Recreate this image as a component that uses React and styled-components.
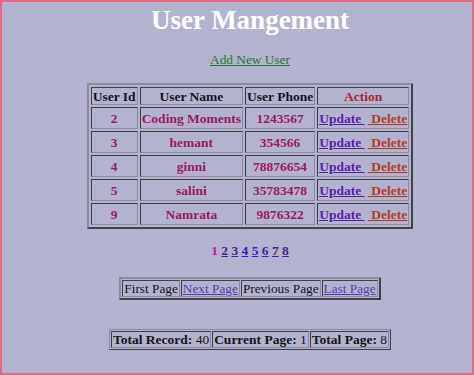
import React from 'react'
import styled, { createGlobalStyle } from 'styled-components'

const GlobalStyle = createGlobalStyle`
  html, body {
    margin: 0;
    padding: 0;
  }
  body {
    font-family: "Liberation Serif", "Times New Roman", serif;
  }
`

const Page = styled.div`
  box-sizing: border-box;
  width: 474px;
  height: 375px;
  border: 2px solid #e06a80;
  background: #b3b3d0;
  display: flex;
  flex-direction: column;
  align-items: center;
  padding-left: 26px;
  overflow: hidden;
`

const Title = styled.h1`
  margin: 3px 0 0;
  font-size: 27px;
  line-height: 30px;
  font-weight: bold;
  color: #ffffff;
`

const AddLink = styled.a`
  margin-top: 17px;
  font-size: 13.33px;
  line-height: 15px;
  color: #1f7a2a;
  text-decoration: underline;
  cursor: pointer;
`

const Table = styled.table`
  border: ${p => p.$border || 2}px outset #8c8c9c;
  border-spacing: ${p => p.$spacing || 2}px;
  margin-top: ${p => p.$top}px;
  font-size: ${p => p.$size || 13.5}px;
  line-height: 15px;
`

const Head = styled.th`
  border: 1px inset #8c8c9c;
  padding: 1px 1px 0;
  font-weight: bold;
  color: ${p => p.$color || '#151520'};
  text-align: center;
  white-space: nowrap;
`

const Cell = styled.td`
  border: 1px inset #8c8c9c;
  padding: 3px 1px 2px;
  font-weight: bold;
  color: #9b1b5a;
  text-align: center;
  white-space: nowrap;
`

const ActionLink = styled.a`
  color: ${p => p.$color};
  text-decoration: underline;
  cursor: pointer;
`

const Pager = styled.div`
  margin-top: 14px;
  font-size: 13.5px;
  line-height: 15px;
  font-weight: bold;
  display: flex;
  gap: 3.4px;
`

const PageNum = styled.a`
  color: ${p => p.$color};
  text-decoration: ${p => (p.$current ? 'none' : 'underline')};
  cursor: pointer;
`

const PlainCell = styled.td`
  border: 1px inset #8c8c9c;
  padding: 0 1px;
  color: #151515;
  white-space: nowrap;
`

const NavLink = styled.a`
  color: #5b3aa8;
  text-decoration: underline;
  cursor: pointer;
`

const users = [
  { id: 2, name: 'Coding Moments', phone: '1243567' },
  { id: 3, name: 'hemant', phone: '354566' },
  { id: 4, name: 'ginni', phone: '78876654' },
  { id: 5, name: 'salini', phone: '35783478' },
  { id: 9, name: 'Namrata', phone: '9876322' },
]

const pageColors = ['#c21f9e', '#4a2590', '#4a2590', '#2222c8', '#2a2ac4', '#3a2ab0', '#4a2590', '#4a2590']

export default function App() {
  return (
    <>
      <GlobalStyle />
      <Page>
        <Title>User Mangement</Title>
        <AddLink>Add New User</AddLink>

        <Table $top={16}>
          <thead>
            <tr>
              <Head>User Id</Head>
              <Head>User Name</Head>
              <Head>User Phone</Head>
              <Head $color="#a52a2a">Action</Head>
            </tr>
          </thead>
          <tbody>
            {users.map(u => (
              <tr key={u.id}>
                <Cell>{u.id}</Cell>
                <Cell>{u.name}</Cell>
                <Cell>{u.phone}</Cell>
                <Cell>
                  <ActionLink $color="#5b1fa8">Update&nbsp;</ActionLink>{' '}
                  <ActionLink $color="#b83a1c">&nbsp;Delete</ActionLink>
                </Cell>
              </tr>
            ))}
          </tbody>
        </Table>

        <Pager>
          {pageColors.map((c, i) => (
            <PageNum key={i} $color={c} $current={i === 0}>{i + 1}</PageNum>
          ))}
        </Pager>

        <Table $top={19} $spacing={1} $size={13.3}>
          <tbody>
            <tr>
              <PlainCell>First Page</PlainCell>
              <PlainCell><NavLink>Next Page</NavLink></PlainCell>
              <PlainCell>Previous Page</PlainCell>
              <PlainCell><NavLink>Last Page</NavLink></PlainCell>
            </tr>
          </tbody>
        </Table>

        <Table $top={29} $spacing={1} $border={1}>
          <tbody>
            <tr>
              <PlainCell><b>Total Record:</b> 40</PlainCell>
              <PlainCell><b>Current Page:</b> 1</PlainCell>
              <PlainCell><b>Total Page:</b> 8</PlainCell>
            </tr>
          </tbody>
        </Table>
      </Page>
    </>
  )
}
